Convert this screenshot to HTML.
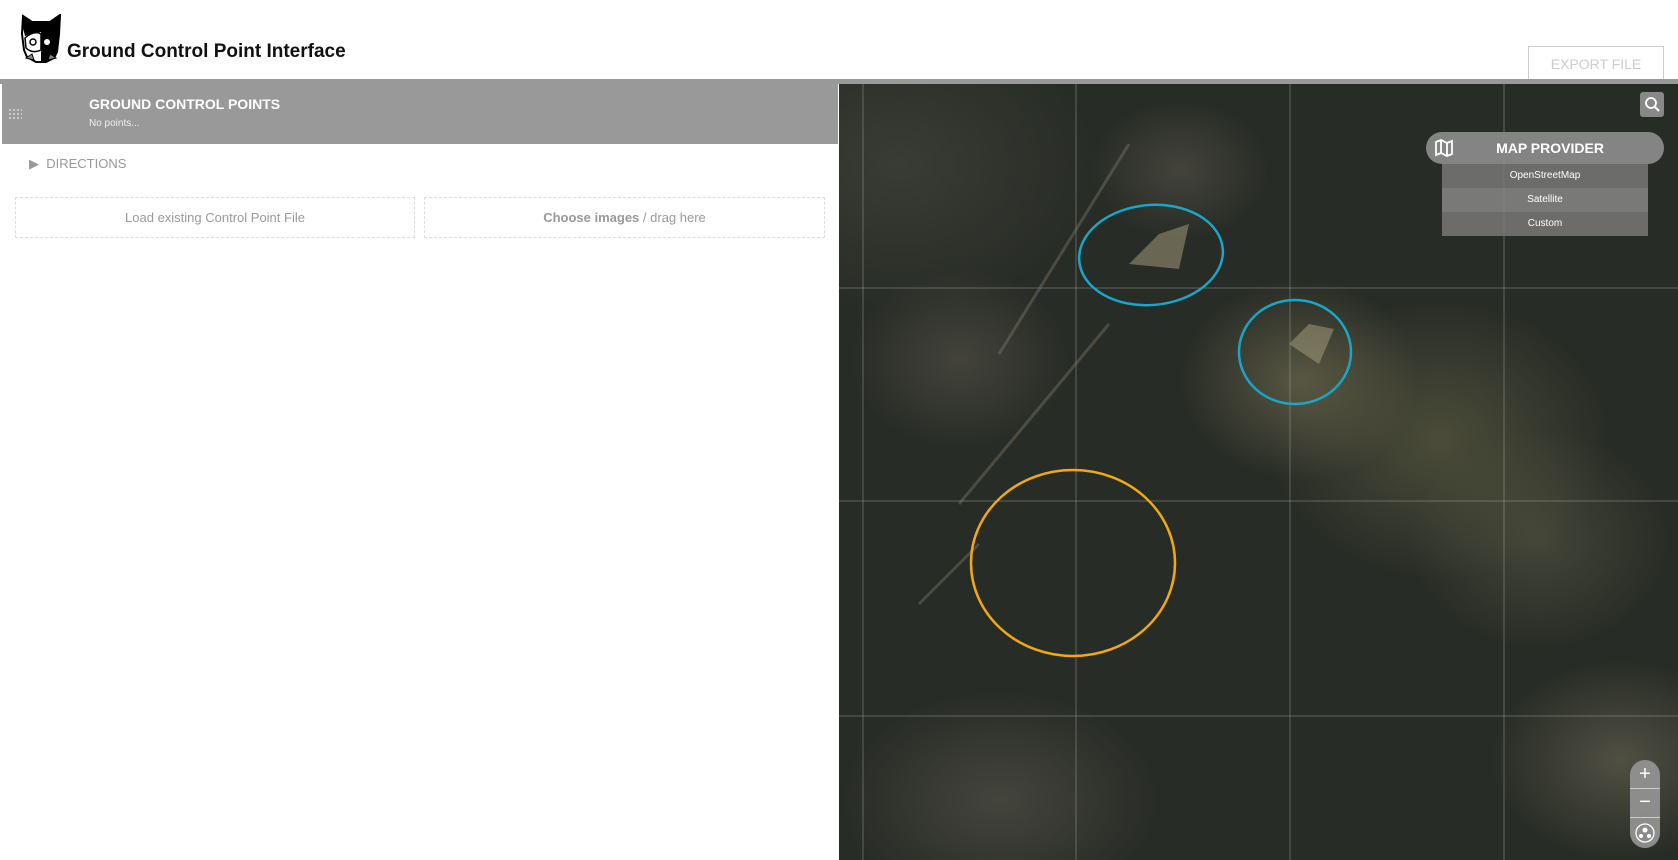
<!DOCTYPE html>
<html><head><meta charset="utf-8"><style>
*{margin:0;padding:0;box-sizing:border-box}
body{width:1678px;height:860px;overflow:hidden;background:#fff;font-family:"Liberation Sans",Arial,sans-serif;position:relative}
.abs{position:absolute}
</style></head><body>
<svg class="abs" style="left:20px;top:14px" width="42" height="50" viewBox="0 0 42 50">
<path d="M3 2 L12 8 L30 8 L40 1 L39 20 L37 38 L34 44 L26 48 L16 48 L7 43 L4 36 L2 20Z" fill="#fff" stroke="#000" stroke-width="2"/>
<path d="M21 8 L30 8 L40 1 L39 20 L37 38 L34 44 L26 48 L21 48Z" fill="#000"/>
<path d="M3 2 L12 8 L21 8 L21 18 L14 20 L5 22 L3 14Z" fill="#000"/>
<path d="M5 24 Q14 16 21 20 L21 36 Q12 40 6 34Z" fill="#fff" stroke="#000" stroke-width="1.5"/>
<circle cx="13" cy="28" r="3" fill="none" stroke="#000" stroke-width="1.5"/>
<circle cx="27" cy="28" r="3" fill="#fff"/>
<path d="M6 44 L12 40 L14 46 Z M36 44 L30 40 L28 46Z" fill="#888" stroke="#000"/>
</svg>
<div class="abs" style="left:67px;top:41px;font-size:19px;font-weight:bold;color:#111">Ground Control Point Interface</div>
<div class="abs" style="left:1528px;top:46px;width:136px;height:34px;border:1px solid #ccc;border-bottom:none;color:#ccc;font-size:14px;text-align:center;line-height:34px">EXPORT FILE</div>
<div class="abs" style="left:0;top:79px;width:1678px;height:5px;background:#999"></div>
<div class="abs" style="left:2px;top:79px;width:836px;height:65px;background:#999"></div>
<div class="abs" style="left:8px;top:108px;width:14px;height:12px;background:radial-gradient(circle,#ccc 1px,transparent 1.3px) 0 0/4px 4px"></div>
<div class="abs" style="left:89px;top:96px;color:#fff;font-size:14px;font-weight:bold">GROUND CONTROL POINTS</div>
<div class="abs" style="left:89px;top:118px;color:#eee;font-size:10px">No points...</div>
<div class="abs" style="left:29px;top:156px;color:#999;font-size:13px">&#9654;&nbsp; DIRECTIONS</div>
<div class="abs" style="left:15px;top:197px;width:400px;height:41px;border:1px dashed #ddd;color:#999;font-size:13px;text-align:center;line-height:39px">Load existing Control Point File</div>
<div class="abs" style="left:424px;top:197px;width:401px;height:41px;border:1px dashed #ddd;color:#999;font-size:13px;text-align:center;line-height:39px"><b>Choose images</b> / drag here</div>
<div class="abs" style="left:839px;top:84px;width:839px;height:776px;overflow:hidden;background:
radial-gradient(ellipse 120px 100px at 461px 296px,rgba(120,115,85,.6),transparent),
radial-gradient(ellipse 170px 140px at 601px 356px,rgba(110,108,75,.5),transparent),
radial-gradient(ellipse 130px 110px at 701px 456px,rgba(100,100,75,.45),transparent),
radial-gradient(ellipse 110px 90px at 121px 276px,rgba(100,95,85,.45),transparent),
radial-gradient(ellipse 90px 70px at 341px 86px,rgba(100,95,85,.45),transparent),
radial-gradient(ellipse 160px 110px at 161px 716px,rgba(110,105,95,.4),transparent),
radial-gradient(ellipse 130px 100px at 781px 676px,rgba(120,115,95,.5),transparent),
radial-gradient(ellipse 200px 150px at 60px 80px,rgba(90,90,80,.35),transparent),
#282c26">
<svg width="839" height="776" style="position:absolute;left:0;top:0">
<g stroke="rgba(200,200,200,.35)" stroke-width="1">
<line x1="24" y1="0" x2="24" y2="776"/><line x1="237" y1="0" x2="237" y2="776"/><line x1="451" y1="0" x2="451" y2="776"/><line x1="665" y1="0" x2="665" y2="776"/>
<line x1="0" y1="204" x2="839" y2="204"/><line x1="0" y1="417" x2="839" y2="417"/><line x1="0" y1="632" x2="839" y2="632"/>
</g>
<path d="M160 270 L290 60 M120 420 L270 240 M80 520 L140 460" stroke="rgba(160,150,130,.3)" stroke-width="3" fill="none"/>
<path d="M290 180 L320 150 L350 140 L340 185Z" fill="rgba(170,160,130,.5)"/>
<path d="M450 260 L470 240 L495 245 L480 280Z" fill="rgba(170,160,130,.5)"/>
<ellipse cx="312" cy="171" rx="72" ry="50" fill="none" stroke="#1aa6c8" stroke-width="2.5" transform="rotate(-5 312 171)"/>
<ellipse cx="456" cy="268" rx="56" ry="52" fill="none" stroke="#1aa6c8" stroke-width="2.5"/>
<ellipse cx="234" cy="479" rx="102" ry="93" fill="none" stroke="#f0a818" stroke-width="2.5"/>
</svg>
</div>
<div class="abs" style="left:1640px;top:92px;width:24px;height:25px;background:#888;border-radius:3px"><svg width="24" height="25"><circle cx="11" cy="11" r="5" stroke="#fff" stroke-width="1.8" fill="none"/><line x1="15" y1="15" x2="19" y2="19" stroke="#fff" stroke-width="2"/></svg></div>
<div class="abs" style="left:1426px;top:132px;width:238px;height:32px;background:rgba(140,140,140,.92);border-radius:16px;color:#fff;font-size:14px;font-weight:bold;line-height:32px;text-align:center;padding-left:10px">MAP PROVIDER
<svg style="position:absolute;left:8px;top:6px" width="20" height="20" viewBox="0 0 20 20"><path d="M2 4 L7 2 L13 5 L18 3 L18 16 L13 18 L7 15 L2 17Z M7 2 L7 15 M13 5 L13 18" fill="none" stroke="#fff" stroke-width="1.8"/></svg></div>
<div class="abs" style="left:1442px;top:164px;width:206px;height:72px;color:#fff;font-size:10px;text-align:center">
<div style="height:24px;line-height:24px;background:rgba(120,120,120,.85)">OpenStreetMap</div>
<div style="height:24px;line-height:24px;background:rgba(135,135,135,.85)">Satellite</div>
<div style="height:24px;line-height:24px;background:rgba(120,120,120,.85)">Custom</div></div>
<div class="abs" style="left:1630px;top:760px;width:30px;height:88px;background:rgba(150,150,150,.9);border-radius:15px;color:#fff;text-align:center">
<div style="height:29px;line-height:29px;font-size:20px;border-bottom:1px solid #ccc">+</div>
<div style="height:29px;line-height:27px;font-size:20px;border-bottom:1px solid #ccc">−</div>
<div style="height:29px;padding-top:5px"><svg width="20" height="20"><circle cx="10" cy="10" r="9" fill="none" stroke="#fff" stroke-width="1.3"/><circle cx="10" cy="7" r="2.5" fill="#fff"/><circle cx="6" cy="13" r="2" fill="#fff"/><circle cx="14" cy="13" r="2" fill="#fff"/></svg></div></div>
</body></html>
